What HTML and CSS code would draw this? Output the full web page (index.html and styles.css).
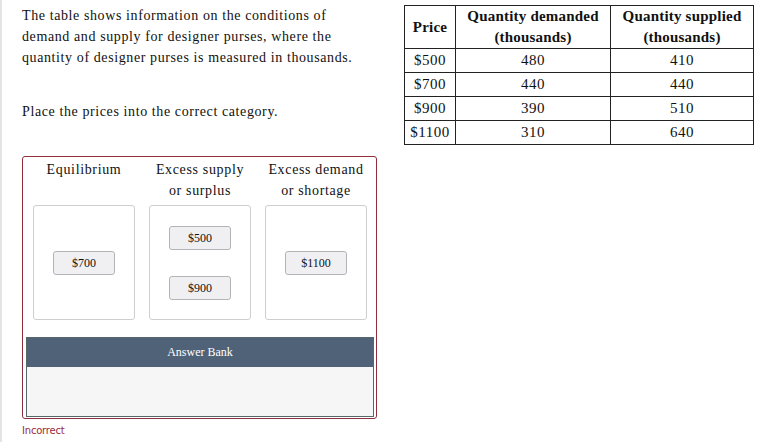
FILE: index.html
```html
<!DOCTYPE html>
<html>
<head>
<meta charset="utf-8">
<link rel="stylesheet" href="styles.css">
</head>
<body>
<div class="page">
  <div class="left">
    <p class="intro">The table shows information on the conditions of demand and supply for designer purses, where the quantity of designer purses is measured in thousands.</p>
    <p class="prompt">Place the prices into the correct category.</p>
    <div class="sorter">
      <div class="columns">
        <div class="col">
          <div class="col-title">Equilibrium</div>
          <div class="drop"><div class="chip">$700</div></div>
        </div>
        <div class="col">
          <div class="col-title">Excess supply<br>or surplus</div>
          <div class="drop"><div class="chip">$500</div><div class="chip">$900</div></div>
        </div>
        <div class="col">
          <div class="col-title">Excess demand<br>or shortage</div>
          <div class="drop"><div class="chip">$1100</div></div>
        </div>
      </div>
      <div class="bank">
        <div class="bank-head">Answer Bank</div>
        <div class="bank-body"></div>
      </div>
    </div>
    <div class="status">Incorrect</div>
  </div>
  <table class="data">
    <tr><th class="c1">Price</th><th class="c2">Quantity demanded<br>(thousands)</th><th class="c3">Quantity supplied<br>(thousands)</th></tr>
    <tr><td>$500</td><td>480</td><td>410</td></tr>
    <tr><td>$700</td><td>440</td><td>440</td></tr>
    <tr><td>$900</td><td>390</td><td>510</td></tr>
    <tr><td>$1100</td><td>310</td><td>640</td></tr>
  </table>
</div>
</body>
</html>
```
FILE: styles.css
```css
html, body { margin: 0; padding: 0; background: #fff; }
body {
  font-family: "Liberation Serif", "Times New Roman", serif;
  color: #111;
  width: 770px;
  height: 442px;
  overflow: hidden;
}
.page {
  display: flex;
  align-items: flex-start;
  border-left: 2px solid #e4e4e4;
  height: 442px;
  box-sizing: border-box;
}
.left {
  width: 382px;
  padding: 5px 0 0 20px;
}
.intro {
  margin: 0;
  font-size: 14px;
  line-height: 21px;
  width: 342px;
  letter-spacing: 0.6px;
}
.prompt {
  margin: 33px 0 0;
  font-size: 14px;
  line-height: 21px;
  letter-spacing: 0.6px;
}
.sorter {
  margin-top: 34px;
  width: 353px;
  border: 1px solid #8e2f3e;
  border-radius: 3px;
  padding-bottom: 1px;
}
.columns {
  display: grid;
  grid-template-columns: repeat(3, 102px);
  column-gap: 14px;
  padding: 2px 0 0 10px;
}
.col-title {
  height: 46px;
  text-align: center;
  font-size: 14px;
  line-height: 21px;
  letter-spacing: 0.65px;
  white-space: nowrap;
}
.drop {
  box-sizing: border-box;
  height: 115px;
  border: 1px solid #cfcfcf;
  border-radius: 3px;
  display: flex;
  flex-direction: column;
  align-items: center;
  justify-content: center;
  gap: 26px;
}
.chip {
  box-sizing: border-box;
  width: 62px;
  height: 24px;
  border: 1px solid #b4b4b8;
  border-radius: 3px;
  background: #f0f0f3;
  font-size: 12px;
  line-height: 22px;
  text-align: center;
}
.bank {
  margin: 17px 0 0 3px;
  width: 348px;
  box-sizing: border-box;
  border: 1px solid #56676a;
}
.bank-head {
  height: 29px;
  background: #4f6278;
  color: #fff;
  font-size: 12px;
  line-height: 29px;
  text-align: center;
}
.bank-body {
  height: 49px;
  background: #f6f6f6;
}
.status {
  margin-top: 6px;
  font-family: "DejaVu Sans", sans-serif;
  font-size: 10px;
  letter-spacing: -0.2px;
  color: #9b2b3a;
}
.data {
  margin-top: 5px;
  border-collapse: collapse;
  font-size: 15px;
  letter-spacing: 0.5px;
  text-align: center;
}
.data th, .data td {
  border: 1px solid #222;
  padding: 0;
}
.data th {
  height: 42px;
  font-size: 15px;
  letter-spacing: 0.2px;
  line-height: 21px;
  font-weight: bold;
}
.data td { height: 23px; line-height: 23px; }
.c1 { width: 50px; }
.c2 { width: 154px; }
.c3 { width: 142px; }
```
